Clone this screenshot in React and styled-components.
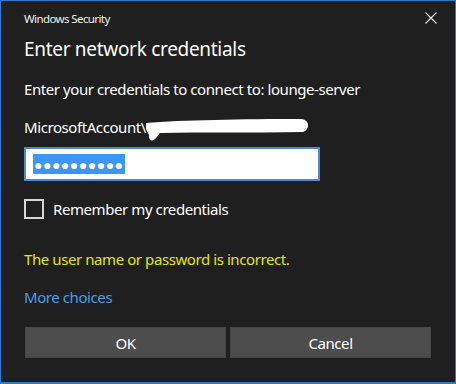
import React, { useState } from "react";
import styled, { createGlobalStyle } from "styled-components";

const Global = createGlobalStyle`
  html, body {
    margin: 0;
    padding: 0;
    background: #1f1f1f;
  }
  * {
    box-sizing: border-box;
  }
`;

const Window = styled.div`
  width: 456px;
  height: 384px;
  background: #1f1f1f;
  border: 1px solid #2b78d0;
  border-bottom-width: 2px;
  display: flex;
  flex-direction: column;
  font-family: "Noto Sans", "Open Sans", sans-serif;
  color: #ffffff;
`;

const TitleBar = styled.div`
  height: 34px;
  display: flex;
  align-items: center;
  justify-content: space-between;
  padding: 0 12px 0 23px;
`;

const TitleText = styled.span`
  font-size: 11.5px;
  letter-spacing: -0.6px;
  color: #f0f0f0;
`;

const CloseButton = styled.button`
  width: 24px;
  height: 24px;
  border: none;
  background: transparent;
  padding: 0;
  display: flex;
  align-items: center;
  justify-content: center;
`;

const Body = styled.div`
  flex: 1;
  padding: 0 23px;
  display: flex;
  flex-direction: column;
`;

const Heading = styled.h1`
  margin: 0;
  font-size: 19px;
  letter-spacing: -0.3px;
  font-weight: 400;
  line-height: 28px;
`;

const Line = styled.p`
  margin: ${(p) => p.top || 0}px 0 0;
  font-size: 15px;
  letter-spacing: -0.42px;
  line-height: 20px;
  color: ${(p) => p.color || "#ffffff"};
`;

const UserRow = styled.div`
  margin-top: 17px;
  height: 22px;
  display: flex;
  align-items: center;
  font-size: 15px;
  letter-spacing: -0.42px;
  line-height: 20px;
`;

const Scribble = styled.svg`
  margin-left: -4px;
  margin-top: 8px;
`;

const PasswordBox = styled.div`
  margin-top: 9px;
  width: 296px;
  height: 34px;
  background: #ffffff;
  border: 2px solid #4f8ad4;
  display: flex;
  align-items: center;
  padding-left: 7px;
`;

const Selection = styled.span`
  background: #3d95f5;
  color: #ffffff;
  height: 20px;
  display: flex;
  align-items: center;
  padding: 0 1px;
  font-size: 14px;
  letter-spacing: 0.5px;
`;

const CheckRow = styled.label`
  margin-top: 18px;
  display: flex;
  align-items: center;
  gap: 9px;
  font-size: 15px;
  letter-spacing: -0.42px;
  cursor: pointer;
`;

const Box = styled.span`
  width: 20px;
  height: 20px;
  border: 2px solid #d6d6d6;
  background: ${(p) => (p.checked ? "#d6d6d6" : "transparent")};
`;

const Link = styled.a`
  margin-top: 18px;
  font-size: 15px;
  letter-spacing: -0.42px;
  line-height: 20px;
  color: #4a9de6;
  text-decoration: none;
  cursor: pointer;
  align-self: flex-start;
`;

const Footer = styled.div`
  padding: 0 24px 24px 24px;
  display: grid;
  grid-template-columns: 1fr 1fr;
  gap: 4px;
`;

const Button = styled.button`
  height: 31px;
  background: #4d4d4d;
  border: 1px solid #454545;
  color: #ffffff;
  font-family: inherit;
  font-size: 15px;
  letter-spacing: -0.42px;
`;

export default function App() {
  const [remember, setRemember] = useState(false);
  return (
    <>
      <Global />
      <Window>
        <TitleBar>
          <TitleText>Windows Security</TitleText>
          <CloseButton aria-label="Close">
            <svg width="12" height="12" viewBox="0 0 12 12">
              <path d="M0.5 0.5 L11.5 11.5 M11.5 0.5 L0.5 11.5" stroke="#e8e8e8" strokeWidth="1.1" />
            </svg>
          </CloseButton>
        </TitleBar>
        <Body>
          <Heading>Enter network credentials</Heading>
          <Line top={16}>Enter your credentials to connect to: lounge-server</Line>
          <UserRow>
            <span>MicrosoftAccount\</span>
            <Scribble width="168" height="24" viewBox="0 0 168 24">
              <path
                d="M4 4 C40 1, 100 0, 160 0 C168 1, 168 11, 161 13 C110 14, 60 13, 18 14 L14 19 C11 23, 6 22, 7 16 L4 10 Z"
                fill="#ffffff"
              />
            </Scribble>
          </UserRow>
          <PasswordBox>
            <Selection>●●●●●●●●●●</Selection>
          </PasswordBox>
          <CheckRow onClick={() => setRemember(!remember)}>
            <Box checked={remember} />
            Remember my credentials
          </CheckRow>
          <Line top={30} color="#e3e31a">
            The user name or password is incorrect.
          </Line>
          <Link>More choices</Link>
        </Body>
        <Footer>
          <Button>OK</Button>
          <Button>Cancel</Button>
        </Footer>
      </Window>
    </>
  );
}
